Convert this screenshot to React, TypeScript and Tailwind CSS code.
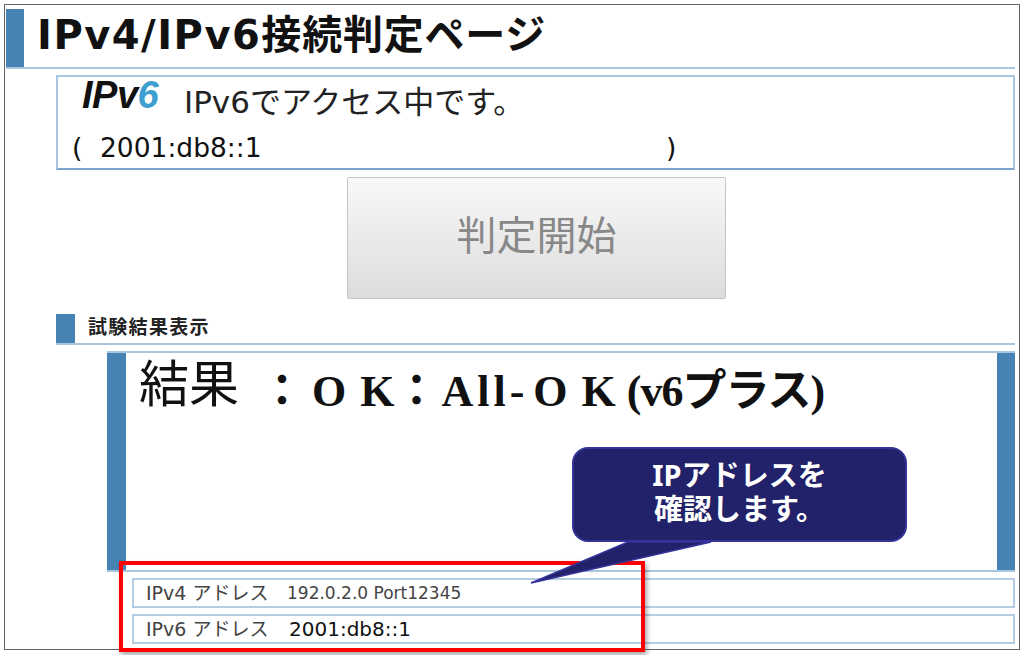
import React from 'react';

const sans = { fontFamily: '"DejaVu Sans", "Noto Sans CJK JP", sans-serif' };
const serif = { fontFamily: '"Liberation Serif", "Noto Sans CJK JP", serif' };

const AddressRow = ({ label, value, valueClass }: { label: string; value: string; valueClass: string }) => (
  <div className="h-[30px] ml-[25px] flex items-center border-2 border-[#b5cde4] pl-[12px] text-[#444]">
    <span className="text-[19px] w-[141px] whitespace-nowrap">{label}</span>
    <span className={valueClass}>{value}</span>
  </div>
);

export default function App() {
  return (
    <div className="relative w-[1024px] h-[655px] bg-white overflow-hidden" style={sans}>
      <div className="relative ml-[4px] mt-[4px] w-[1016px] h-[646px] border border-[#666] pl-[1px] pt-[4px] pr-[4px]">
        {/* page title */}
        <div className="flex h-[60px] border-b-2 border-[#a9c6e0]">
          <div className="w-[18px] bg-[#4682b4]" />
          <h1 className="ml-[13px] mt-[1px] text-[40px] leading-[50px] font-bold tracking-[0.8px] text-[#111] whitespace-nowrap">
            <span className="tracking-[1.5px]">IPv4/IPv6</span>接続判定ページ
          </h1>
        </div>

        {/* access state */}
        <div className="mt-[6px] ml-[50px] h-[95px] border-2 border-[#a9c6e0] border-b-[#7ea6cc]">
          <div className="flex items-start h-[50px]">
            <span className="ml-[24px] mt-[-4px] w-[80px] text-[38px] leading-[44px] font-bold italic tracking-[-0.5px] text-[#111] whitespace-nowrap" style={{ fontFamily: '"Liberation Sans", sans-serif' }}>
              IPv<span className="text-[#3c9fd0]">6</span>
            </span>
            <span className="ml-[22px] mt-[4px] text-[31px] leading-[42px] text-[#222] whitespace-nowrap">IPv6でアクセス中です。</span>
          </div>
          <div className="relative flex items-center h-[40px] mt-[1px] text-[26.5px] text-[#111]">
            <span className="ml-[14px] w-[28px]">(</span>
            <span>2001:db8::1</span>
            <span className="absolute left-[608px]">)</span>
          </div>
        </div>

        {/* start button */}
        <div className="mt-[7px] ml-[341px] w-[379px] h-[122px] pb-[5px] flex items-center justify-center rounded-[2px] border border-[#c4c4c4] bg-gradient-to-b from-[#f9f9f9] to-[#dcdcdc] text-[40px] text-[#888]">
          判定開始
        </div>

        {/* result heading */}
        <div className="mt-[15px] ml-[50px] flex h-[31px] border-b-2 border-[#a9c6e0]">
          <div className="w-[19px] bg-[#4682b4]" />
          <h2 className="ml-[13px] text-[19px] leading-[26px] font-bold tracking-[1.3px] text-[#222] whitespace-nowrap">試験結果表示</h2>
        </div>

        {/* result panel */}
        <div className="mt-[6px] ml-[101px] h-[221px] flex border-t-2 border-b-2 border-[#a9c6e0]">
          <div className="w-[19px] bg-[#4682b4]" />
          <div className="flex-1 flex items-start pl-[13px] text-[#111] whitespace-nowrap">
            <span className="mt-[2px] text-[50px] leading-[60px]">結果</span>
            <span className="mt-[4px] ml-[21px] text-[44px] leading-[70px] font-bold" style={serif}>
              ：
              <span className="ml-[8px]">O</span>
              <span className="ml-[14px]">K</span>
              ：
              <span className="ml-[3px] tracking-[4px]">All</span>
              -
              <span className="ml-[9px]">O</span>
              <span className="ml-[14px]">K</span>
              <span className="ml-[11px] tracking-[-1px]">(v6プラス)</span>
            </span>
          </div>
          <div className="w-[18px] bg-[#4682b4]" />
        </div>

        {/* addresses */}
        <div className="ml-[101px] mt-[6px] flex flex-col gap-[6px]">
          <AddressRow label="IPv4 アドレス" value="192.0.2.0 Port12345" valueClass="mt-[1px] text-[17px]" />
          <AddressRow label="IPv6 アドレス" value="2001:db8::1" valueClass="ml-[2px] text-[20px] text-[#111]" />
        </div>
      </div>

      {/* red highlight over the address rows */}
      <div className="absolute left-[119px] top-[561px] w-[526px] h-[91px] border-[4px] border-[#ff0000] shadow-[2px_3px_5px_rgba(0,0,0,0.35)]" />

      {/* callout */}
      <svg className="absolute left-[525px] top-[535px]" width="195" height="55" viewBox="0 0 195 55">
        <path d="M103 7 L6 48 L186 7 Z" fill="#22226a" stroke="#33339a" strokeWidth="1.5" />
      </svg>
      <div className="absolute left-[572px] top-[447px] w-[335px] h-[95px] pb-[6px] flex items-center justify-center rounded-[16px] border-2 border-[#33339a] bg-[#22226a] text-center text-[29px] leading-[34px] font-bold text-white" style={{ fontFamily: '"Noto Sans", "Noto Sans CJK JP", sans-serif' }}>
        <p>
          IPアドレスを
          <br />
          確認します。
        </p>
      </div>
    </div>
  );
}
